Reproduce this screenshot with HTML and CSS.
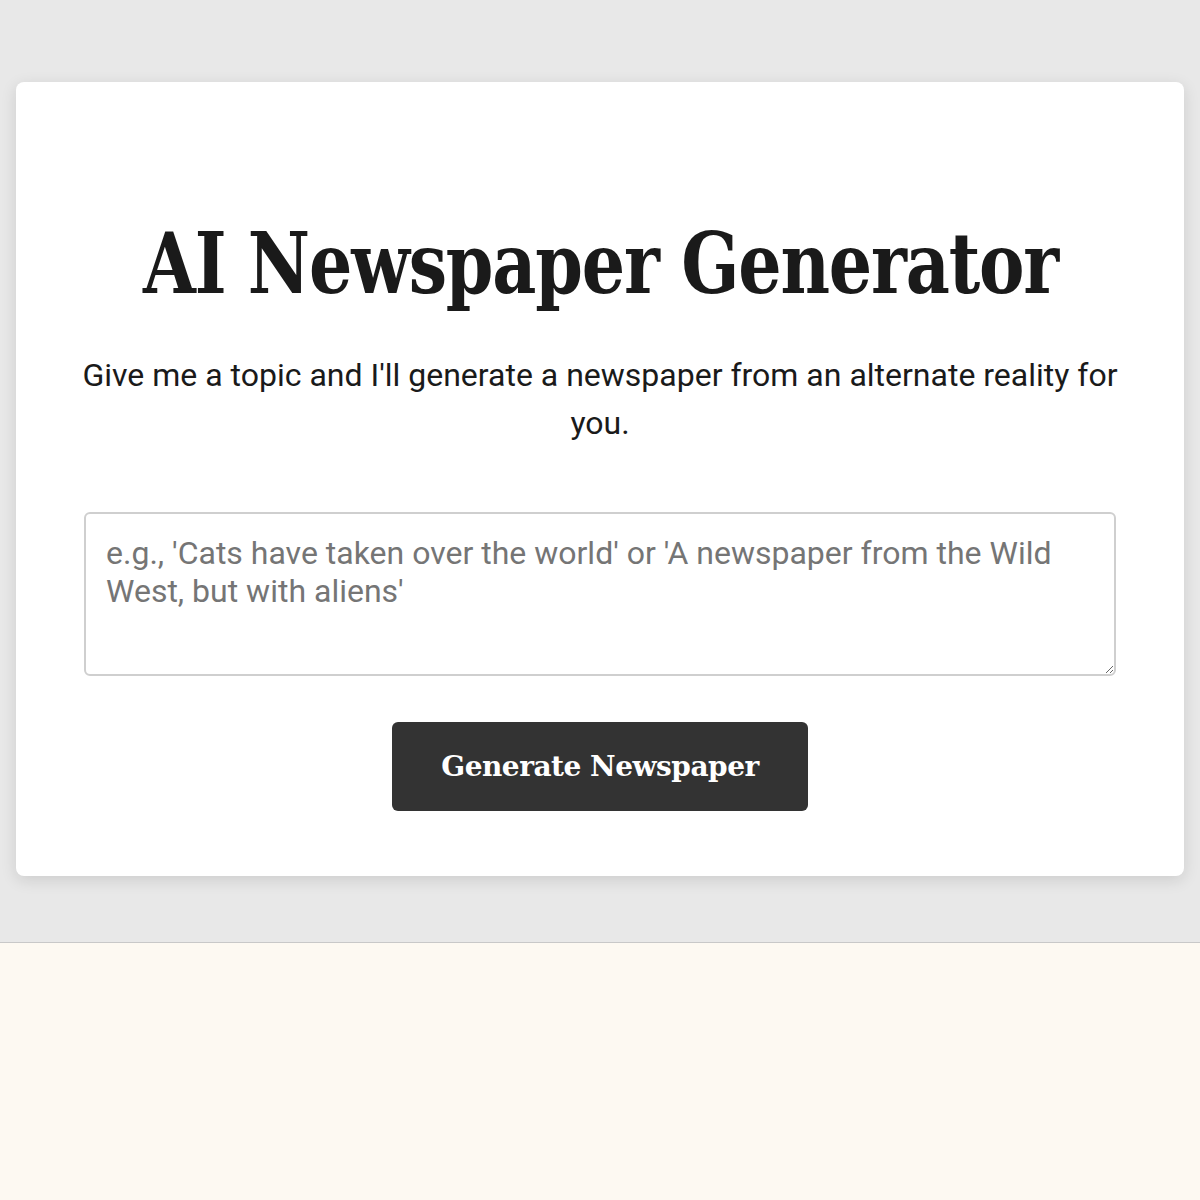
FILE: index.html
```html
<!DOCTYPE html>
<html lang="en">
<head>
<meta charset="utf-8">
<title>AI Newspaper Generator</title>
<link rel="stylesheet" href="styles.css">
</head>
<body>
<header class="hero">
  <div class="card">
    <h1 class="title"><span class="title-text">AI Newspaper Generator</span></h1>
    <p class="subtitle">Give me a topic and I'll generate a newspaper from an alternate reality for you.</p>
    <textarea class="topic" placeholder="e.g., 'Cats have taken over the world' or 'A newspaper from the Wild West, but with aliens'"></textarea>
    <div class="actions">
      <button class="generate" type="button">Generate Newspaper</button>
    </div>
  </div>
</header>
<main class="paper"></main>
</body>
</html>
```
FILE: styles.css
```css
html, body {
  margin: 0;
  padding: 0;
}
body {
  font-family: Roboto, "Liberation Sans", sans-serif;
  color: #1a1a1a;
  background: #fdf9f2;
  min-height: 1200px;
}
.hero {
  background: #e8e8e8;
  padding: 82px 16px 66px;
  border-bottom: 1px solid #c8c8c8;
}
.card {
  background: #fff;
  border-radius: 8px;
  box-shadow: 0 4px 16px rgba(0, 0, 0, 0.12);
  padding: 64px 68px 65px;
  display: flex;
  flex-direction: column;
  align-items: stretch;
}
.title {
  display: flex;
  justify-content: center;
  font-family: "DejaVu Serif", serif;
  font-weight: bold;
  font-size: 84px;
  line-height: 1.2;
  letter-spacing: -1.5px;
  white-space: nowrap;
  margin: 68px 0 36px;
  color: #1a1a1a;
}
.title-text {
  display: block;
  flex: none;
  transform: scaleX(0.812);
  transform-origin: center;
}
.subtitle {
  font-size: 32px;
  line-height: 48px;
  text-align: center;
  margin: 0 -8px 65px;
  color: #1a1a1a;
}
.topic {
  box-sizing: border-box;
  width: 100%;
  height: 164px;
  border: 2px solid #cfcfcf;
  border-radius: 6px;
  padding: 20px 20px;
  font-family: Roboto, "Liberation Sans", sans-serif;
  font-size: 32px;
  line-height: 38px;
  color: #1a1a1a;
  display: block;
}
.topic::placeholder {
  color: #757575;
}
.actions {
  display: flex;
  justify-content: center;
  margin-top: 46px;
}
.generate {
  width: 416px;
  height: 89px;
  background: #333;
  color: #fff;
  border: none;
  border-radius: 6px;
  font-family: "DejaVu Serif", serif;
  font-weight: bold;
  font-size: 28px;
  letter-spacing: -0.5px;
  padding-top: 2px;
  cursor: pointer;
}
.paper {
  background: #fdf9f2;
}
```
